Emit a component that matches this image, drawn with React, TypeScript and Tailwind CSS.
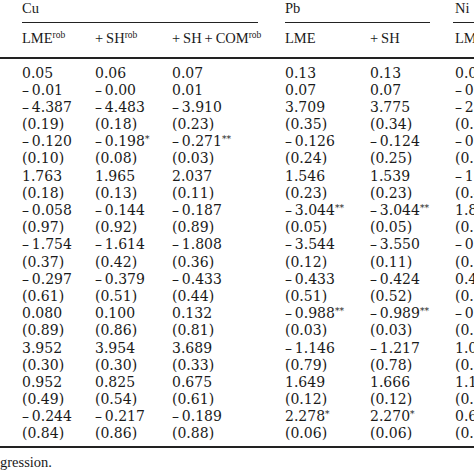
const NUM = "font-['DejaVu_Serif','Liberation_Serif',serif]";
const TXT = "font-['Liberation_Serif','DejaVu_Serif',serif] text-[14.5px]";

type Cell = { v: string; star?: string };

// "-" in a value is drawn as a typeset minus: dash + thin space
const c = (v: string, star?: string): Cell => ({ v: v.replace('-', '\u2013\u2009'), star });

// rows of Cu (3), Pb (2), Ni (1, cut at the right edge)
const rows: Cell[][] = [
  [c('0.05'), c('0.06'), c('0.07'), c('0.13'), c('0.13'), c('0.06')],
  [c('-0.01'), c('-0.00'), c('0.01'), c('0.07'), c('0.07'), c('-0.01')],
  [c('-4.387'), c('-4.483'), c('-3.910'), c('3.709'), c('3.775'), c('-2.134')],
  [c('(0.19)'), c('(0.18)'), c('(0.23)'), c('(0.35)'), c('(0.34)'), c('(0.06)')],
  [c('-0.120'), c('-0.198', '*'), c('-0.271', '**'), c('-0.126'), c('-0.124'), c('-0.107')],
  [c('(0.10)'), c('(0.08)'), c('(0.03)'), c('(0.24)'), c('(0.25)'), c('(0.15)')],
  [c('1.763'), c('1.965'), c('2.037'), c('1.546'), c('1.539'), c('-1.412')],
  [c('(0.18)'), c('(0.13)'), c('(0.11)'), c('(0.23)'), c('(0.23)'), c('(0.42)')],
  [c('-0.058'), c('-0.144'), c('-0.187'), c('-3.044', '**'), c('-3.044', '**'), c('1.843')],
  [c('(0.97)'), c('(0.92)'), c('(0.89)'), c('(0.05)'), c('(0.05)'), c('(0.31)')],
  [c('-1.754'), c('-1.614'), c('-1.808'), c('-3.544'), c('-3.550'), c('-0.532')],
  [c('(0.37)'), c('(0.42)'), c('(0.36)'), c('(0.12)'), c('(0.11)'), c('(0.92)')],
  [c('-0.297'), c('-0.379'), c('-0.433'), c('-0.433'), c('-0.424'), c('0.412')],
  [c('(0.61)'), c('(0.51)'), c('(0.44)'), c('(0.51)'), c('(0.52)'), c('(0.64)')],
  [c('0.080'), c('0.100'), c('0.132'), c('-0.988', '**'), c('-0.989', '**'), c('-0.611')],
  [c('(0.89)'), c('(0.86)'), c('(0.81)'), c('(0.03)'), c('(0.03)'), c('(0.13)')],
  [c('3.952'), c('3.954'), c('3.689'), c('-1.146'), c('-1.217'), c('1.021')],
  [c('(0.30)'), c('(0.30)'), c('(0.33)'), c('(0.79)'), c('(0.78)'), c('(0.82)')],
  [c('0.952'), c('0.825'), c('0.675'), c('1.649'), c('1.666'), c('1.133')],
  [c('(0.49)'), c('(0.54)'), c('(0.61)'), c('(0.12)'), c('(0.12)'), c('(0.53)')],
  [c('-0.244'), c('-0.217'), c('-0.189'), c('2.278', '*'), c('2.270', '*'), c('0.641')],
  [c('(0.84)'), c('(0.86)'), c('(0.88)'), c('(0.06)'), c('(0.06)'), c('(0.72)')],
];

const cols = 'grid grid-cols-[73px_77px_113px_85px_85px_140px] pl-[22px]';

function Rob() {
  return <sup className="text-[9.5px]">rob</sup>;
}

export default function App() {
  return (
    <div className={`w-[474px] h-[474px] overflow-hidden bg-white text-[#1a1a1a] text-[14px] ${NUM}`}>
      <div className="w-[600px]">
        {/* group headings */}
        <div className={`${cols} ${TXT} h-[23px] leading-[16px]`}>
          <div className="col-span-3 mr-[27px] border-b border-[#222]">Cu</div>
          <div className="col-span-2 mr-[25px] border-b border-[#222]">Pb</div>
          <div className="-ml-[2px] pl-[2px] border-b border-[#222]">Ni</div>
        </div>

        {/* column headings */}
        <div className={`${cols} ${TXT} pt-[7px] pb-[11px] leading-[16px] border-b-2 border-[#222]`}>
          <div>LME<Rob /></div>
          <div>+{'\u2009'}SH<Rob /></div>
          <div>+{'\u2009'}SH{'\u2009'}+{'\u2009'}COM<Rob /></div>
          <div>LME</div>
          <div>+{'\u2009'}SH</div>
          <div>LME<Rob /></div>
        </div>

        {/* values */}
        <div className="pt-[5.5px] pb-[3.5px] border-b-2 border-[#222]">
          {rows.map((row, i) => (
            <div key={i} className={`${cols} h-[17.2px] leading-[17.2px] whitespace-nowrap`}>
              {row.map((cell, j) => (
                <div key={j}>
                  {cell.v}
                  {cell.star && <sup className="text-[9px]">{cell.star}</sup>}
                </div>
              ))}
            </div>
          ))}
        </div>

        <p className={`${TXT} pt-[5.5px] leading-[16px]`}>gression.</p>
      </div>
    </div>
  );
}
